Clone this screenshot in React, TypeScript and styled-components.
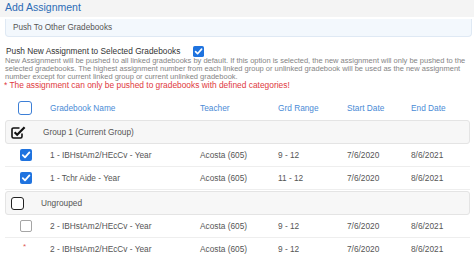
import React from "react";
import styled, { createGlobalStyle } from "styled-components";

const Global = createGlobalStyle`
  html, body { margin: 0; padding: 0; background: #fff; }
  body { font-family: "Liberation Sans", Arial, sans-serif; width: 474px; height: 258px; overflow: hidden; }
  * { box-sizing: border-box; }
`;

const Page = styled.div`
  display: flex;
  flex-direction: column;
  width: 474px;
`;

const TitleBar = styled.div`
  height: 17px;
  background: #f4f4f4;
  padding: 0 0 0 5px;
  display: flex;
  align-items: flex-start;
  font-size: 10.5px;
  line-height: 15px;
  color: #2c6cb6;
`;

const PushPanel = styled.div`
  margin: 2px 2px 0 5px;
  height: 18px;
  background: #f3f8fd;
  border: 1px solid #dfe9f4;
  border-top: none;
  border-radius: 0 0 4px 4px;
  padding-left: 7px;
  display: flex;
  align-items: center;
  font-size: 8.2px;
  color: #555;
`;

const PushRow = styled.div`
  margin-top: 8px;
  height: 12px;
  padding-left: 6px;
  display: flex;
  align-items: center;
  gap: 13px;
  font-size: 8.3px;
  color: #333;
`;

const Desc = styled.div`
  padding: 0 5px;
  font-size: 7.5px;
  line-height: 8px;
  color: #858585;
`;

const Warning = styled.div`
  padding: 0 4px;
  font-size: 8.4px;
  line-height: 9px;
  color: #e0393e;
`;

const Grid = styled.div<{ $h: number; $sep?: boolean }>`
  display: grid;
  grid-template-columns: 50px 150px 78px 69px 64px 1fr;
  align-items: center;
  height: ${(p) => p.$h}px;
  margin: 0 4px 0 0;
  font-size: 8.3px;
  color: #555;
  ${(p) => (p.$sep ? "border-bottom: 1px solid #eeeeee; margin-left: 5px;" : "")}
`;

const HeaderRow = styled(Grid)`
  margin-top: 5px;
  color: #4a8bd6;
`;

const DataRow = styled(Grid)`
  grid-template-columns: 45px 150px 78px 69px 64px 1fr;
`;

const Cell = styled.div<{ $center?: boolean; $lead?: boolean }>`
  display: flex;
  align-items: center;
  justify-content: ${(p) => (p.$center ? "center" : "flex-start")};
  padding-left: ${(p) => (p.$lead ? 15 : 0)}px;
  white-space: nowrap;
`;

const GroupBox = styled.div<{ $gap?: number }>`
  height: 24px;
  margin: ${(p) => p.$gap ?? 0}px 4px 0 5px;
  background: #f7f7f7;
  border: 1px solid #e4e4e4;
  border-radius: 3px;
  padding-left: 5px;
  display: flex;
  align-items: center;
  gap: 17px;
  font-size: 8.3px;
  color: #555;
`;

const HeadBox = styled.span`
  width: 14px;
  height: 14px;
  border: 1.5px solid #3d7fd6;
  border-radius: 3px;
  background: #fff;
  display: inline-block;
`;

const EmptyBox = styled.span<{ $dark?: boolean }>`
  width: ${(p) => (p.$dark ? 13 : 12)}px;
  height: ${(p) => (p.$dark ? 13 : 12)}px;
  border: ${(p) => (p.$dark ? "1.4px solid #222" : "1px solid #a5a5a5")};
  border-radius: ${(p) => (p.$dark ? 3 : 2)}px;
  background: #fff;
  display: inline-block;
`;

const Star = styled.span`
  color: #e05a5a;
  font-size: 8px;
  line-height: 8px;
  margin: -4px 0 0 3px;
`;

const BlueCheck = ({ size = 11 }: { size?: number }) => (
  <svg width={size} height={size} viewBox="0 0 12 12">
    <rect x="0" y="0" width="12" height="12" rx="2" fill="#1f73df" />
    <path d="M2.8 6.2 L5 8.4 L9.4 3.4" fill="none" stroke="#fff" strokeWidth="1.8" strokeLinecap="round" strokeLinejoin="round" />
  </svg>
);

const SquareCheck = () => (
  <svg width="15" height="15" viewBox="0 0 15 15">
    <path d="M11 8.5 V11.5 A1.5 1.5 0 0 1 9.5 13 H2.5 A1.5 1.5 0 0 1 1 11.5 V4.5 A1.5 1.5 0 0 1 2.5 3 H8.5" fill="none" stroke="#111" strokeWidth="1.6" />
    <path d="M3.6 7.2 L6.2 9.8 L13.6 2.2" fill="none" stroke="#111" strokeWidth="2.2" strokeLinejoin="miter" />
  </svg>
);

type R = { name: string; teacher: string; grd: string; start: string; end: string };

const rowsG1: R[] = [
  { name: "1 - IBHstAm2/HEcCv - Year", teacher: "Acosta (605)", grd: "9 - 12", start: "7/6/2020", end: "8/6/2021" },
  { name: "1 - Tchr Aide - Year", teacher: "Acosta (605)", grd: "11 - 12", start: "7/6/2020", end: "8/6/2021" },
];
const rowsU: R[] = [
  { name: "2 - IBHstAm2/HEcCv - Year", teacher: "Acosta (605)", grd: "9 - 12", start: "7/6/2020", end: "8/6/2021" },
  { name: "2 - IBHstAm2/HEcCv - Year", teacher: "Acosta (605)", grd: "9 - 12", start: "7/6/2020", end: "8/6/2021" },
];

const Row = ({ r, lead }: { r: R; lead: React.ReactNode }) => (
  <DataRow $h={23} $sep>
    <Cell $lead>{lead}</Cell>
    <Cell>{r.name}</Cell>
    <Cell>{r.teacher}</Cell>
    <Cell>{r.grd}</Cell>
    <Cell>{r.start}</Cell>
    <Cell>{r.end}</Cell>
  </DataRow>
);

export default function App() {
  return (
    <Page>
      <Global />
      <TitleBar>Add Assignment</TitleBar>
      <PushPanel>Push To Other Gradebooks</PushPanel>
      <PushRow>
        <span>Push New Assignment to Selected Gradebooks</span>
        <BlueCheck size={11} />
      </PushRow>
      <Desc>
        New Assignment will be pushed to all linked gradebooks by default. If this option is selected, the new assignment will only be pushed to the selected gradebooks. The highest assignment number from each linked group or unlinked gradebook will be used as the new assignment number except for current linked group or current unlinked gradebook.
      </Desc>
      <Warning>* The assignment can only be pushed to gradebooks with defined categories!</Warning>
      <HeaderRow $h={25}>
        <Cell $center>
          <HeadBox />
        </Cell>
        <Cell>Gradebook Name</Cell>
        <Cell>Teacher</Cell>
        <Cell>Grd Range</Cell>
        <Cell>Start Date</Cell>
        <Cell>End Date</Cell>
      </HeaderRow>
      <GroupBox>
        <SquareCheck />
        <span>Group 1 (Current Group)</span>
      </GroupBox>
      {rowsG1.map((r, i) => (
        <Row key={i} r={r} lead={<BlueCheck size={12} />} />
      ))}
      <GroupBox $gap={1}>
        <EmptyBox $dark />
        <span>Ungrouped</span>
      </GroupBox>
      <Row r={rowsU[0]} lead={<EmptyBox />} />
      <Row r={rowsU[1]} lead={<Star>*</Star>} />
    </Page>
  );
}
